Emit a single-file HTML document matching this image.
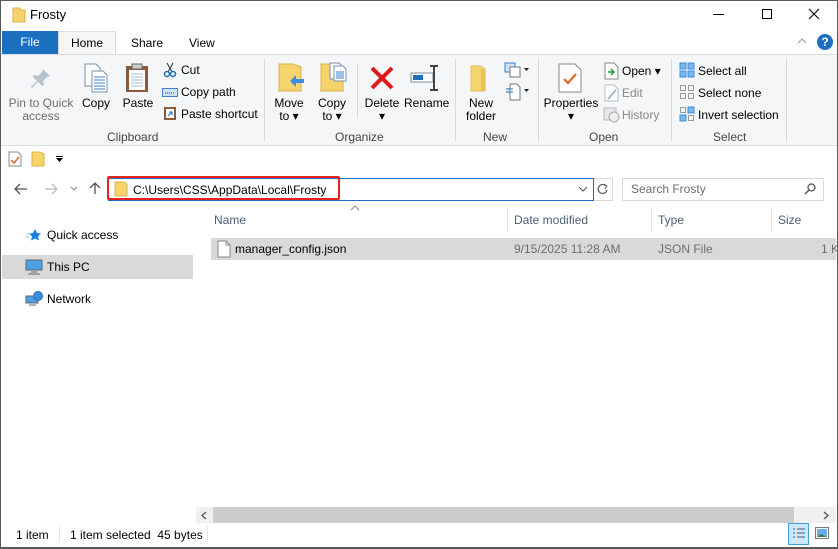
<!DOCTYPE html>
<html><head><meta charset="utf-8"><style>
*{box-sizing:border-box;margin:0;padding:0}
body{width:838px;height:549px;overflow:hidden;background:#fff;font-family:"Liberation Sans",sans-serif;font-size:12px;color:#000;position:relative}
.a{position:absolute;white-space:nowrap}
.g{color:#6d6d6d}
.lbl{position:absolute;text-align:center;line-height:13px;font-size:12px}
.grp{position:absolute;top:130px;font-size:12px;color:#444}
.sep{position:absolute;top:58px;width:1px;height:84px;background:#dadbdc}
</style></head><body>
<!-- window border -->
<div class="a" style="left:0;top:0;width:838px;height:549px;border:1px solid #5a5a5a;border-bottom:2px solid #5a5a5a"></div>
<!-- title -->
<svg class="a" style="left:12px;top:7px" width="14" height="16"><path d="M1 1h7v2h5v12H1z" fill="#f6d36b" stroke="#d9b04a"/></svg>
<div class="a" style="left:30px;top:7px;font-size:13px">Frosty</div>
<div class="a" style="left:713px;top:14px;width:11px;height:1px;background:#000"></div>
<div class="a" style="left:762px;top:9px;width:10px;height:10px;border:1px solid #000"></div>
<svg class="a" style="left:808px;top:8px" width="12" height="12"><path d="M1 1L11 11M11 1L1 11" stroke="#000" stroke-width="1.1"/></svg>
<!-- tabs -->
<div class="a" style="left:2px;top:31px;width:56px;height:23px;background:#1a6fc0;color:#fff;text-align:center;line-height:23px">File</div>
<div class="a" style="left:58px;top:31px;width:58px;height:24px;border:1px solid #dadbdc;border-bottom:none;background:#f5f6f7;text-align:center;line-height:22px">Home</div>
<div class="a" style="left:131px;top:36px">Share</div>
<div class="a" style="left:189px;top:36px">View</div>
<svg class="a" style="left:797px;top:37px" width="10" height="8"><path d="M1 6L5 2L9 6" stroke="#999" fill="none"/></svg>
<div class="a" style="left:817px;top:34px;width:16px;height:16px;border-radius:50%;background:#1a6fc0;color:#fff;font-weight:bold;text-align:center;line-height:16px;font-size:12px">?</div>
<!-- ribbon -->
<div class="a" style="left:1px;top:54px;width:836px;height:92px;background:#f5f6f7;border-top:1px solid #dadbdc;border-bottom:1px solid #dadbdc"></div>
<!-- Pin -->
<svg class="a" style="left:30px;top:67px" width="22" height="24"><path d="M13 2l7 7-3 1-4 4 1 4-2 1-4-4-6 6-1-1 6-6-4-4 1-2 4 1 4-4z" fill="#b6c3d1"/></svg>
<div class="lbl g" style="left:6px;top:97px;width:70px">Pin to Quick<br>access</div>
<!-- Copy -->
<svg class="a" style="left:83px;top:63px" width="26" height="30"><path d="M2 1h11l4 4v18H2z" fill="#fff" stroke="#7a8ea8"/><path d="M9 8h11l4 4v17H9z" fill="#fff" stroke="#7a8ea8"/><path d="M11 14h11M11 17h11M11 20h11M11 23h11M11 26h11" stroke="#3d7fd0"/></svg>
<div class="lbl" style="left:76px;top:97px;width:40px">Copy</div>
<!-- Paste -->
<svg class="a" style="left:125px;top:63px" width="24" height="30"><rect x="1" y="3" width="22" height="26" fill="#8a5a3a"/><rect x="4" y="7" width="16" height="20" fill="#fff"/><rect x="7" y="1" width="10" height="5" fill="#ccc" stroke="#666"/><path d="M6 11h12M6 14h12M6 17h12M6 20h12M6 23h12" stroke="#9fb8d8"/></svg>
<div class="lbl" style="left:118px;top:97px;width:40px">Paste</div>
<svg class="a" style="left:163px;top:62px" width="14" height="16"><path d="M4 1l5 9M10 1L5 10" stroke="#333"/><circle cx="4" cy="12" r="2.5" fill="none" stroke="#1a6fc0" stroke-width="1.5"/><circle cx="10" cy="12" r="2.5" fill="none" stroke="#1a6fc0" stroke-width="1.5"/></svg>
<div class="a" style="left:181px;top:63px">Cut</div>
<svg class="a" style="left:162px;top:86px" width="16" height="12"><rect x=".5" y="2.5" width="15" height="8" fill="#cfe3f6" stroke="#3d7fd0"/><path d="M3 7h10" stroke="#333" stroke-dasharray="1 1"/></svg>
<div class="a" style="left:181px;top:85px">Copy path</div>
<svg class="a" style="left:163px;top:105px" width="14" height="16"><rect x="1" y="2" width="12" height="13" fill="#8a5a3a"/><rect x="3" y="4" width="8" height="9" fill="#fff"/><path d="M5 11l4-4M6 7h3v3" stroke="#1a6fc0" fill="none"/></svg>
<div class="a" style="left:181px;top:107px">Paste shortcut</div>
<div class="grp" style="left:107px">Clipboard</div>
<div class="sep" style="left:264px"></div>
<!-- Move to -->
<svg class="a" style="left:278px;top:63px" width="28" height="30"><path d="M1 1h14l8 3v24H1z" fill="#f6d36b" stroke="#d9b04a"/><path d="M12 18l6-6v4h8v4h-8v4z" fill="#3d8ee0"/></svg>
<div class="lbl" style="left:270px;top:97px;width:38px">Move<br>to ▾</div>
<svg class="a" style="left:320px;top:61px" width="28" height="32"><path d="M1 3h14l8 3v24H1z" fill="#f6d36b" stroke="#d9b04a"/><path d="M10 2h9l3 3v13H10z" fill="#fff" stroke="#7a8ea8"/><path d="M14 5h9l3 3v12H14z" fill="#fff" stroke="#7a8ea8"/><path d="M16 11h8M16 13h8M16 15h8M16 17h8" stroke="#3d7fd0"/></svg>
<div class="lbl" style="left:313px;top:97px;width:38px">Copy<br>to ▾</div>
<div class="sep" style="left:357px;top:63px;height:55px"></div>
<div class="grp" style="left:335px">Organize</div>
<svg class="a" style="left:369px;top:65px" width="26" height="26"><path d="M3 3L23 23M23 3L3 23" stroke="#e01a1a" stroke-width="4"/></svg>
<div class="lbl" style="left:362px;top:97px;width:40px">Delete<br>▾</div>
<svg class="a" style="left:410px;top:63px" width="32" height="30"><rect x="1" y="10" width="22" height="9" fill="#fff" stroke="#7a8ea8"/><rect x="3" y="12" width="10" height="5" fill="#1a6fc0"/><path d="M20 3h8M24 3v24M20 27h8" stroke="#444" stroke-width="2"/></svg>
<div class="lbl" style="left:404px;top:97px;width:44px">Rename</div>
<div class="sep" style="left:455px"></div>
<svg class="a" style="left:469px;top:65px" width="22" height="28"><path d="M2 1h10l4 3v22H2z" fill="#f6d36b" stroke="#e0c060"/><path d="M12 4h4v22h-4z" fill="#e9c150"/></svg>
<div class="lbl" style="left:460px;top:97px;width:42px">New<br>folder</div>
<svg class="a" style="left:504px;top:62px" width="26" height="16"><rect x="1" y="1" width="10" height="9" fill="#cfe3f6" stroke="#3d7fd0"/><rect x="6" y="5" width="10" height="10" fill="#fff" stroke="#777"/><path d="M20 6h5l-2.5 3z" fill="#222"/></svg>
<svg class="a" style="left:504px;top:83px" width="26" height="18"><path d="M6 1h7l3 3v13H6z" fill="#fff" stroke="#777"/><path d="M2 6h7M2 9h7" stroke="#1a6fc0"/><path d="M20 6h5l-2.5 3z" fill="#222"/></svg>
<div class="grp" style="left:483px">New</div>
<div class="sep" style="left:538px"></div>
<svg class="a" style="left:558px;top:63px" width="24" height="30"><path d="M1 1h16l6 6v22H1z" fill="#fff" stroke="#888"/><path d="M6 16l4 4 8-9" stroke="#e8662a" stroke-width="2.2" fill="none"/></svg>
<div class="lbl" style="left:542px;top:97px;width:58px">Properties<br>▾</div>
<svg class="a" style="left:604px;top:62px" width="16" height="18"><path d="M1 1h9l4 4v12H1z" fill="#fff" stroke="#888"/><path d="M4 10h5M7 7l3 3-3 3" stroke="#1aa038" stroke-width="1.5" fill="none"/></svg>
<div class="a" style="left:622px;top:64px">Open ▾</div>
<svg class="a" style="left:604px;top:84px" width="16" height="18"><path d="M1 1h9l4 4v12H1z" fill="#fff" stroke="#bbb"/><path d="M4 15l8-9" stroke="#9fb8d8" stroke-width="2"/></svg>
<div class="a g" style="left:622px;top:86px;color:#888">Edit</div>
<svg class="a" style="left:603px;top:105px" width="18" height="18"><rect x="1" y="3" width="12" height="12" fill="#e5e8eb" stroke="#bbb"/><circle cx="11" cy="12" r="5" fill="#eee" stroke="#aaa"/></svg>
<div class="a" style="left:622px;top:108px;color:#888">History</div>
<div class="grp" style="left:589px">Open</div>
<div class="sep" style="left:671px"></div>
<svg class="a" style="left:679px;top:62px" width="16" height="16"><rect x="1" y="1" width="6" height="6" fill="#7db6ea" stroke="#3d8ee0"/><rect x="9" y="1" width="6" height="6" fill="#7db6ea" stroke="#3d8ee0"/><rect x="1" y="9" width="6" height="6" fill="#7db6ea" stroke="#3d8ee0"/><rect x="9" y="9" width="6" height="6" fill="#7db6ea" stroke="#3d8ee0"/></svg>
<div class="a" style="left:698px;top:64px">Select all</div>
<svg class="a" style="left:679px;top:84px" width="16" height="16"><g fill="none" stroke="#999"><rect x="1.5" y="1.5" width="5" height="5"/><rect x="9.5" y="1.5" width="5" height="5"/><rect x="1.5" y="9.5" width="5" height="5"/><rect x="9.5" y="9.5" width="5" height="5"/></g></svg>
<div class="a" style="left:698px;top:86px">Select none</div>
<svg class="a" style="left:679px;top:106px" width="16" height="16"><rect x="1.5" y="1.5" width="5" height="5" fill="none" stroke="#999"/><rect x="9" y="1" width="6" height="6" fill="#7db6ea" stroke="#3d8ee0"/><rect x="1" y="9" width="6" height="6" fill="#7db6ea" stroke="#3d8ee0"/><rect x="9.5" y="9.5" width="5" height="5" fill="none" stroke="#999"/></svg>
<div class="a" style="left:698px;top:108px">Invert selection</div>
<div class="grp" style="left:713px">Select</div>
<div class="sep" style="left:786px"></div>
<!-- quick toolbar -->
<svg class="a" style="left:8px;top:151px" width="14" height="16"><path d="M1 1h9l3 3v11H1z" fill="#fff" stroke="#888"/><path d="M3 9l3 3 5-6" stroke="#e8662a" stroke-width="1.5" fill="none"/></svg>
<svg class="a" style="left:31px;top:151px" width="14" height="16"><path d="M1 1h8l4 2v12H1z" fill="#f6d36b" stroke="#d9b04a"/></svg>
<div class="a" style="left:56px;top:156px;width:7px;height:1px;background:#000"></div>
<svg class="a" style="left:56px;top:158px" width="8" height="5"><path d="M0 0h7l-3.5 4z" fill="#000"/></svg>
<!-- address bar row -->
<svg class="a" style="left:14px;top:183px" width="14" height="12"><path d="M13 6H2M6 1L1 6l5 5" stroke="#555" fill="none" stroke-width="1.3"/></svg>
<svg class="a" style="left:44px;top:183px" width="14" height="12"><path d="M1 6h11M8 1l5 5-5 5" stroke="#bbb" fill="none" stroke-width="1.3"/></svg>
<svg class="a" style="left:70px;top:186px" width="8" height="6"><path d="M1 1l3 3 3-3" stroke="#888" fill="none"/></svg>
<svg class="a" style="left:89px;top:181px" width="12" height="14"><path d="M6 13V2M1 7l5-5 5 5" stroke="#555" fill="none" stroke-width="1.3"/></svg>
<div class="a" style="left:108px;top:178px;width:486px;height:23px;border:1px solid #1a6fc0"></div>
<div class="a" style="left:107px;top:176px;width:233px;height:24px;border:2px solid #e8201e;border-radius:2px"></div>
<svg class="a" style="left:114px;top:181px" width="14" height="16"><path d="M1 1h8l4 2v12H1z" fill="#f6d36b" stroke="#d9b04a"/></svg>
<div class="a" style="left:133px;top:183px">C:\Users\CSS\AppData\Local\Frosty</div>
<svg class="a" style="left:578px;top:186px" width="10" height="6"><path d="M1 1l4 4 4-4" stroke="#555" fill="none"/></svg>
<div class="a" style="left:594px;top:178px;width:19px;height:23px;border:1px solid #d9d9d9;border-left:none"></div>
<svg class="a" style="left:596px;top:182px" width="14" height="14"><path d="M10 4a4.5 4.5 0 1 0 1 4" stroke="#666" fill="none" stroke-width="1.3"/><path d="M8 2l3 2-2 3" stroke="#666" fill="none"/></svg>
<div class="a" style="left:622px;top:178px;width:202px;height:23px;border:1px solid #d9d9d9"></div>
<div class="a g" style="left:631px;top:182px">Search Frosty</div>
<svg class="a" style="left:804px;top:183px" width="12" height="12"><circle cx="7.5" cy="4.5" r="3.5" stroke="#555" fill="none" stroke-width="1.3"/><path d="M5 7L1 11" stroke="#555" stroke-width="1.5"/></svg>
<!-- nav pane -->
<svg class="a" style="left:26px;top:228px" width="16" height="14"><path d="M9 1l2 4 4 .5-3 3 1 4-4-2-4 2 1-4-3-3 4-.5z" fill="#1a82e0"/><path d="M1 6h4M0 9h3" stroke="#7ab8ef"/></svg>
<div class="a" style="left:47px;top:228px">Quick access</div>
<div class="a" style="left:2px;top:255px;width:191px;height:24px;background:#d9d9d9"></div>
<svg class="a" style="left:25px;top:259px" width="18" height="16"><rect x="1" y="1" width="16" height="10" fill="#4aa3ea" stroke="#666"/><path d="M6 13h6M3 15h12" stroke="#666"/></svg>
<div class="a" style="left:47px;top:260px">This PC</div>
<svg class="a" style="left:25px;top:290px" width="18" height="16"><rect x="1" y="6" width="12" height="7" fill="#4aa3ea" stroke="#666"/><circle cx="13" cy="6" r="4.5" fill="#3d8ee0" stroke="#2a6bb0"/><path d="M4 15h7" stroke="#666"/></svg>
<div class="a" style="left:47px;top:292px">Network</div>
<!-- file list -->
<svg class="a" style="left:350px;top:205px" width="10" height="6"><path d="M1 5l4-4 4 4" stroke="#888" fill="none"/></svg>
<div class="a" style="left:214px;top:213px;color:#4c607a">Name</div>
<div class="a" style="left:507px;top:208px;width:1px;height:24px;background:#e5e5e5"></div>
<div class="a" style="left:514px;top:213px;color:#4c607a">Date modified</div>
<div class="a" style="left:651px;top:208px;width:1px;height:24px;background:#e5e5e5"></div>
<div class="a" style="left:658px;top:213px;color:#4c607a">Type</div>
<div class="a" style="left:771px;top:208px;width:1px;height:24px;background:#e5e5e5"></div>
<div class="a" style="left:778px;top:213px;color:#4c607a">Size</div>
<div class="a" style="left:211px;top:238px;width:625px;height:22px;background:#d9d9d9"></div>
<svg class="a" style="left:217px;top:240px" width="14" height="18"><path d="M1 1h8l4 4v12H1z" fill="#fff" stroke="#888"/><path d="M9 1v4h4" stroke="#888" fill="none"/></svg>
<div class="a" style="left:235px;top:242px">manager_config.json</div>
<div class="a g" style="left:514px;top:242px">9/15/2025 11:28 AM</div>
<div class="a g" style="left:658px;top:242px">JSON File</div>
<div class="a g" style="left:821px;top:242px">1 K</div>
<!-- scrollbar -->
<div class="a" style="left:196px;top:507px;width:640px;height:16px;background:#f0f0f0"></div>
<div class="a" style="left:213px;top:507px;width:581px;height:16px;background:#cdcdcd"></div>
<svg class="a" style="left:201px;top:511px" width="6" height="9"><path d="M5 1L1 4.5 5 8" stroke="#555" fill="none" stroke-width="1.3"/></svg>
<svg class="a" style="left:823px;top:511px" width="6" height="9"><path d="M1 1l4 3.5L1 8" stroke="#555" fill="none" stroke-width="1.3"/></svg>
<!-- status -->
<div class="a" style="left:16px;top:528px">1 item</div>
<div class="a" style="left:59px;top:526px;width:1px;height:16px;background:#e5e5e5"></div>
<div class="a" style="left:70px;top:528px">1 item selected&nbsp; 45 bytes</div>
<div class="a" style="left:207px;top:526px;width:1px;height:16px;background:#e5e5e5"></div>
<div class="a" style="left:788px;top:523px;width:21px;height:22px;background:#cce8ff;border:1px solid #3fa0e0"></div>
<svg class="a" style="left:792px;top:527px" width="14" height="14"><path d="M1 2h2M5 2h8M1 6h2M5 6h8M1 10h2M5 10h8" stroke="#555"/></svg>
<svg class="a" style="left:815px;top:527px" width="14" height="12"><rect x=".5" y=".5" width="13" height="11" fill="#fff" stroke="#777"/><rect x="2" y="2" width="10" height="8" fill="#6aaee8"/><path d="M2 10l4-3 6 3z" fill="#4c7a3a"/></svg>
</body></html>
